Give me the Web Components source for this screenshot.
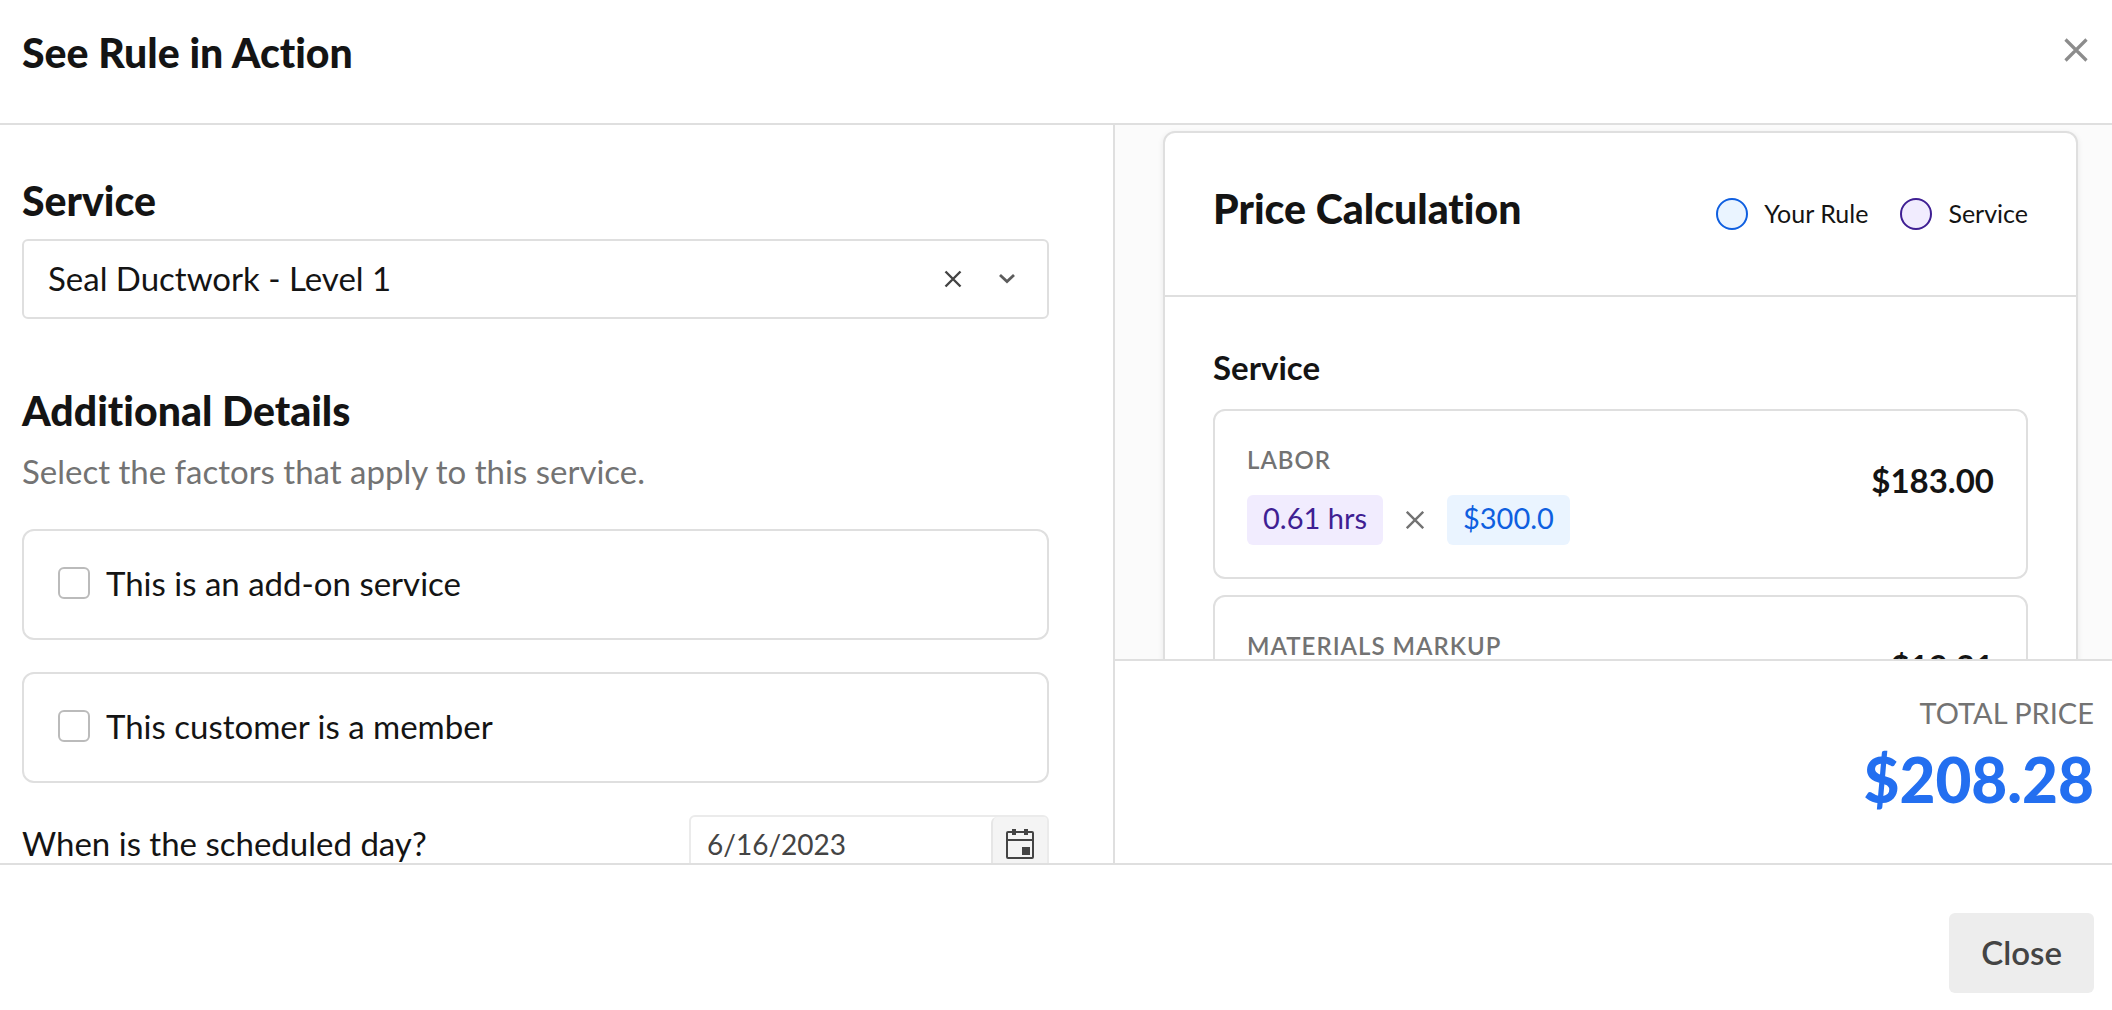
<!DOCTYPE html>
<html lang="en">
<head>
<meta charset="utf-8">
<title>See Rule in Action</title>
<style>
  html, body { height: 100%; margin: 0; }
  body {
    --line: #dfdfdf;
    --ink: #141414;
    --muted: #737373;
    --blue: #0f5fe0;
    --blue-soft: #eaf4ff;
    --violet: #3f1f93;
    --violet-soft: #f1ecfe;
    font: 33px/40px Lato, "Liberation Sans", sans-serif;
    font-variant-ligatures: none;
    color: var(--ink);
    background: #fff;
  }
</style>
</head>
<body>
<rule-dialog>
  <span slot="title">See Rule in Action</span>
  <rule-form slot="form"></rule-form>
  <price-panel slot="result"></price-panel>
</rule-dialog>

<script>
const define = (name, html, setup) => {
  const template = document.createElement('template');
  template.innerHTML = '<style>*, *::before { box-sizing: border-box; } button, input { font: inherit; color: inherit; margin: 0; } button { border: 0; background: none; padding: 0; cursor: pointer; } h1, h2, h3, p { margin: 0; } svg { display: block; }</style>' + html;
  customElements.define(name, class extends HTMLElement {
    constructor() {
      super();
      this.attachShadow({ mode: 'open' }).append(template.content.cloneNode(true));
    }
    connectedCallback() { if (setup) setup(this, this.shadowRoot); }
  });
};

define('check-card', `
  <style>
    :host { display: block; border: 2px solid var(--line); border-radius: 12px; }
    label { display: flex; align-items: center; gap: 16px; height: 107px; padding: 34px 34px 37px; }
    input { appearance: none; width: 32px; height: 32px; border: 2px solid #bbb; border-radius: 6px; background: #fff; }
    input:checked { background: var(--blue); border-color: var(--blue); }
  </style>
  <label><input type="checkbox"><span><slot></slot></span></label>
`);

define('service-picker', `
  <style>
    :host { display: flex; align-items: center; height: 80px; border: 2px solid var(--line); border-radius: 6px; padding: 0 22px 0 24px; }
    input { flex: 1; min-width: 0; border: 0; outline: 0; padding: 0 0 3px; background: none; }
    button { width: 36px; height: 36px; display: grid; place-items: center; }
    .open { margin-left: 18px; }
  </style>
  <input type="text" role="combobox" aria-label="Service" aria-expanded="false" value="Seal Ductwork - Level 1">
  <button type="button" aria-label="Clear"><svg width="18" height="18" viewBox="0 0 18 18" fill="none" stroke="#444" stroke-width="2.4"><path d="M1.5 1.5 16.500 16.500M16.500 1.500 1.500 16.500"/></svg></button>
  <button type="button" class="open" aria-label="Open list"><svg width="18" height="18" viewBox="0 0 18 18" fill="none" stroke="#5c5c5c" stroke-width="2.800"><path d="M2 5 9 11.500 16 5"/></svg></button>
`);

define('date-field', `
  <style>
    :host { display: flex; width: 360px; height: 80px; border: 2px solid #ebebeb; border-radius: 6px; overflow: hidden; font-size: 28px; color: #444; }
    input { flex: 1; min-width: 0; height: 56px; border: 0; outline: 0; padding: 0 16px 2px; background: none; }
    button { width: 56px; height: 56px; display: flex; justify-content: center; padding-top: 12px; background: #f4f4f4; border-left: 2px solid #e6e6e6; border-radius: 6px 0 0 6px; }
  </style>
  <input id="day" type="text" aria-label="When is the scheduled day?" value="6/16/2023">
  <button type="button" aria-label="Open calendar"><svg width="28" height="30" viewBox="0 0 28 30"><path fill="none" stroke="#444" stroke-width="2" d="M2 3h24a1 1 0 0 1 1 1v24a1 1 0 0 1-1 1H2a1 1 0 0 1-1-1V4a1 1 0 0 1 1-1zM1 11h26"/><path fill="#444" d="M6 0h4v6H6zM18 0h4v6h-4zM16 18h8v8h-8z"/></svg></button>
`);

define('rule-form', `
  <style>
    :host { display: block; padding: 51px 64px 0 22px; }
    h2 { font-size: 41px; line-height: 50px; font-weight: 900; }
    service-picker { margin-top: 13px; }
    .details { margin-top: 67px; }
    p { margin-top: 13px; line-height: 44px; color: var(--muted); }
    .cards { display: grid; gap: 32px; margin-top: 36px; }
    .day { display: flex; justify-content: space-between; margin-top: 32px; }
    .day span { padding-top: 8px; }
  </style>
  <h2>Service</h2>
  <service-picker></service-picker>
  <h2 class="details">Additional Details</h2>
  <p>Select the factors that apply to this service.</p>
  <div class="cards">
    <check-card>This is an add-on service</check-card>
    <check-card>This customer is a member</check-card>
  </div>
  <div class="day"><span>When is the scheduled day?</span><date-field></date-field></div>
`);

define('legend-key', `
  <style>
    :host { display: flex; align-items: center; gap: 16px; height: 32px; font-size: 25px; line-height: 30px; }
    :host::before { content: ""; box-sizing: border-box; width: 32px; height: 32px; border: 2px solid var(--blue); border-radius: 50%; background: var(--blue-soft); }
    :host([kind="service"])::before { border-color: var(--violet); background: var(--violet-soft); }
    span { padding-bottom: 2px; }
  </style>
  <span><slot></slot></span>
`);

define('value-chip', `
  <style>
    :host { display: block; box-sizing: border-box; height: 50px; padding: 3px 16px; border-radius: 6px; font-size: 29px; line-height: 40px; color: var(--blue); background: var(--blue-soft); }
    :host([kind="service"]) { color: var(--violet); background: var(--violet-soft); }
  </style>
  <slot></slot>
`);

define('price-line', `
  <style>
    :host { display: flex; box-sizing: border-box; justify-content: space-between; height: 170px; padding: 32px; border: 2px solid var(--line); border-radius: 12px; }
    h3 { font-size: 24px; line-height: 34px; font-weight: 600; letter-spacing: 1px; color: var(--muted); }
    .factors { display: flex; align-items: center; gap: 23px; margin-top: 18px; }
    strong { padding-top: 17px; font-weight: 700; }
  </style>
  <div><h3></h3><div class="factors"><slot></slot></div></div>
  <strong></strong>
`, (host, root) => {
  root.querySelector('h3').textContent = host.getAttribute('label');
  root.querySelector('strong').textContent = host.getAttribute('amount');
});

define('times-sign', `
  <style>:host { display: block; }</style>
  <svg width="18" height="18" viewBox="0 0 18 18" fill="none" stroke="#737373" stroke-width="2.4"><path d="M.8 .8 17.200 17.200M17.200 .8 .8 17.200"/></svg>
`);

define('price-panel', `
  <style>
    :host { display: flex; flex-direction: column; min-height: 0; height: 100%; background: #fbfbfb; }
    .scroll { flex: 1; min-height: 0; overflow: auto; scrollbar-width: none; padding: 6px 34px 48px 48px; }
    .card { background: #fff; border: 2px solid var(--line); border-radius: 12px; box-shadow: 0 2px 6px rgba(0, 0, 0, .08); }
    header { display: flex; justify-content: space-between; align-items: center; height: 164px; padding: 0 48px; border-bottom: 2px solid var(--line); }
    h2 { font-size: 41px; line-height: 50px; font-weight: 900; padding-bottom: 10px; }
    .legend { display: flex; gap: 32px; }
    .lines { display: grid; gap: 16px; padding: 47px 48px 48px; }
    h3 { font-size: 33px; line-height: 46px; font-weight: 700; padding-bottom: 3px; }
    .total { background: #fff; border-top: 2px solid var(--line); height: 204px; padding: 32px 18px 0; text-align: right; }
    .total p { font-size: 29px; line-height: 40px; color: var(--muted); }
    output { display: block; margin-top: 14px; font-size: 62px; line-height: 64px; font-weight: 900; color: #236ff0; }
  </style>
  <div class="scroll">
    <section class="card">
      <header>
        <h2>Price Calculation</h2>
        <div class="legend"><legend-key>Your Rule</legend-key><legend-key kind="service">Service</legend-key></div>
      </header>
      <div class="lines">
        <h3>Service</h3>
        <price-line label="LABOR" amount="$183.00"><value-chip kind="service">0.61 hrs</value-chip><times-sign></times-sign><value-chip>$300.0</value-chip></price-line>
        <price-line label="MATERIALS MARKUP" amount="$19.21"></price-line>
      </div>
    </section>
  </div>
  <div class="total"><p>TOTAL PRICE</p><output>$208.28</output></div>
`);

define('rule-dialog', `
  <style>
    :host { display: flex; flex-direction: column; height: 100vh; background: #fff; }
    header { display: flex; justify-content: space-between; height: 125px; padding: 28px 22px 0; border-bottom: 2px solid var(--line); }
    h1 { font-size: 41px; line-height: 50px; font-weight: 900; }
    header button { width: 28px; height: 44px; display: grid; place-items: center; }
    main { flex: 1; min-height: 0; display: grid; grid-template-columns: 1115fr 997fr; grid-template-rows: 100%; }
    .left { border-right: 2px solid var(--line); overflow: auto; scrollbar-width: none; }
    .right { min-width: 0; }
    footer { display: flex; justify-content: flex-end; height: 147px; padding: 48px 18px 0; border-top: 2px solid var(--line); }
    footer button { height: 80px; padding: 0 32px 3px; border-radius: 6px; background: #ededed; color: #444; font-weight: 600; }
  </style>
  <header>
    <h1><slot name="title"></slot></h1>
    <button type="button" aria-label="Close dialog"><svg width="24" height="24" viewBox="0 0 24 24" fill="none" stroke="#8c8c8c" stroke-width="3.2"><path d="M1.500 1.500 22.500 22.500M22.500 1.500 1.500 22.500"/></svg></button>
  </header>
  <main><div class="left"><slot name="form"></slot></div><div class="right"><slot name="result"></slot></div></main>
  <footer><button type="button">Close</button></footer>
`);
</script>
</body>
</html>
